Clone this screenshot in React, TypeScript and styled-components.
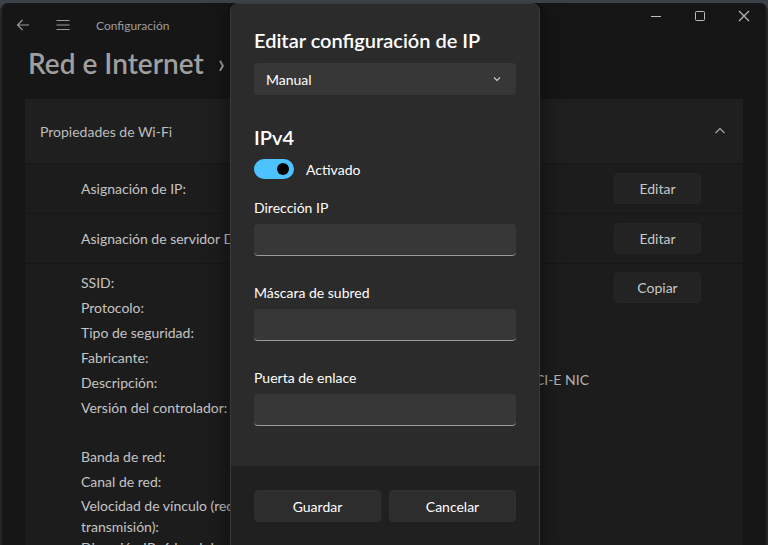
import React from 'react';
import styled, {createGlobalStyle} from 'styled-components';

const font = `"Lato", "Liberation Sans", sans-serif`;

const GlobalStyle = createGlobalStyle`
    html, body {
        margin: 0;
        padding: 0;
        background: #3b4049;
        font-family: ${font};
        overflow: hidden;
    }
`;

const infoRows = [
    'SSID:',
    'Protocolo:',
    'Tipo de seguridad:',
    'Fabricante:',
    'Descripción:',
    'Versión del controlador:',
];

const bandRows = ['Banda de red:', 'Canal de red:', 'Velocidad de vínculo (recepción/', 'transmisión):', 'Dirección IPv6 local de vínculo:'];

const fields = ['Dirección IP', 'Máscara de subred', 'Puerta de enlace'];

const App = () => {
    return (
        <>
            <GlobalStyle />
            <Window>
                <TitleBar>
                    <TitleLeft>
                        <IconSlot>
                            <svg width="16" height="16" viewBox="0 0 16 16" fill="none" stroke="#9a9a9a" strokeWidth="1.1">
                                <path d="M14 8H2.5M7.5 3L2.5 8l5 5" />
                            </svg>
                        </IconSlot>
                        <IconSlot>
                            <svg width="16" height="16" viewBox="0 0 16 16" fill="none" stroke="#9a9a9a" strokeWidth="1.1">
                                <path d="M1.5 3.5h13M1.5 8h13M1.5 12.5h13" />
                            </svg>
                        </IconSlot>
                        <AppName>Configuración</AppName>
                    </TitleLeft>
                    <Controls>
                        <ControlBtn>
                            <svg width="12" height="12" viewBox="0 0 12 12" stroke="#bdbdbd" strokeWidth="1"><path d="M1 6.5h10" /></svg>
                        </ControlBtn>
                        <ControlBtn>
                            <svg width="12" height="12" viewBox="0 0 12 12" fill="none" stroke="#bdbdbd" strokeWidth="1"><rect x="1.5" y="1.5" width="9" height="9" rx="1" /></svg>
                        </ControlBtn>
                        <ControlBtn>
                            <svg width="12" height="12" viewBox="0 0 12 12" stroke="#bdbdbd" strokeWidth="1.1"><path d="M1 1l10 10M11 1L1 11" /></svg>
                        </ControlBtn>
                    </Controls>
                </TitleBar>

                <PageTitle>
                    Red e Internet
                    <Crumb>›</Crumb>
                </PageTitle>

                <Card>
                    <CardHeader>
                        <span>Propiedades de Wi-Fi</span>
                        <svg width="14" height="14" viewBox="0 0 14 14" fill="none" stroke="#a8a8a8" strokeWidth="1.2">
                            <path d="M2.5 9L7 4.5 11.5 9" />
                        </svg>
                    </CardHeader>
                    <Row>
                        <RowLabel>Asignación de IP:</RowLabel>
                        <GhostButton>Editar</GhostButton>
                    </Row>
                    <Row>
                        <RowLabel>Asignación de servidor DNS:</RowLabel>
                        <GhostButton>Editar</GhostButton>
                    </Row>
                    <InfoBlock>
                        <InfoList>
                            {infoRows.map((r) => (
                                <InfoLine key={r}>{r}</InfoLine>
                            ))}
                            <Spacer />
                            {bandRows.map((r) => (
                                <InfoLine key={r}>{r}</InfoLine>
                            ))}
                        </InfoList>
                        <InfoValues>
                            <GhostButton>Copiar</GhostButton>
                            <ValueText>Realtek RTL8822CE 802.11ac PCI-E NIC</ValueText>
                        </InfoValues>
                    </InfoBlock>
                </Card>

                <Dialog>
                    <DialogBody>
                        <DialogTitle>Editar configuración de IP</DialogTitle>
                        <Select>
                            <span>Manual</span>
                            <svg width="10" height="10" viewBox="0 0 10 10" fill="none" stroke="#cfcfcf" strokeWidth="1.1">
                                <path d="M2 3.5l3 3 3-3" />
                            </svg>
                        </Select>
                        <SectionTitle>IPv4</SectionTitle>
                        <ToggleRow>
                            <Toggle>
                                <Knob />
                            </Toggle>
                            <span>Activado</span>
                        </ToggleRow>
                        {fields.map((f) => (
                            <Field key={f}>
                                <FieldLabel>{f}</FieldLabel>
                                <Input />
                            </Field>
                        ))}
                    </DialogBody>
                    <DialogFooter>
                        <DialogButton>Guardar</DialogButton>
                        <DialogButton>Cancelar</DialogButton>
                    </DialogFooter>
                </Dialog>
            </Window>
        </>
    );
};

const Window = styled.div`
    position: relative;
    margin-top: 3px;
    height: 542px;
    background-color: #161616;
    border-radius: 8px 8px 0 0;
    border-left: 2px solid #262626;
    border-right: 2px solid #262626;
    box-sizing: border-box;
    overflow: hidden;
    color: #c4c4c4;
`;

const TitleBar = styled.div`
    display: flex;
    justify-content: space-between;
    height: 40px;
`;

const TitleLeft = styled.div`
    display: flex;
    align-items: center;
    padding: 4px 0 0 1px;
`;

const IconSlot = styled.div`
    width: 40px;
    display: flex;
    justify-content: center;
`;

const AppName = styled.div`
    margin-left: 13px;
    font-size: 12px;
    color: #9e9e9e;
`;

const Controls = styled.div`
    display: flex;
    height: 26px;
`;

const ControlBtn = styled.div`
    width: 44px;
    display: flex;
    justify-content: center;
    align-items: center;
`;

const PageTitle = styled.div`
    display: flex;
    align-items: center;
    gap: 14px;
    padding-left: 26px;
    height: 40px;
    font-size: 28px;
    font-weight: 600;
    color: #9f9f9f;
`;

const Crumb = styled.span`
    font-size: 26px;
    font-weight: 400;
    color: #a8a8a8;
`;

const Card = styled.div`
    margin: 16px 23px 0 23px;
    background-color: #1c1c1c;
    border-radius: 4px 4px 0 0;
`;

const CardHeader = styled.div`
    display: flex;
    justify-content: space-between;
    align-items: center;
    height: 64px;
    padding: 0 16px 0 15px;
    font-size: 14px;
    color: #bcbcbc;
    background-color: #1f1f1f;
    border-bottom: 1px solid #161616;
`;

const Row = styled.div`
    display: flex;
    justify-content: space-between;
    align-items: center;
    height: 49px;
    padding: 0 42px 0 56px;
    border-bottom: 1px solid #161616;
`;

const RowLabel = styled.div`
    font-size: 14px;
    color: #c4c4c4;
`;

const GhostButton = styled.div`
    width: 87px;
    height: 31px;
    display: flex;
    align-items: center;
    justify-content: center;
    border-radius: 4px;
    background-color: #232323;
    border: 1px solid #262626;
    box-sizing: border-box;
    font-size: 14px;
    color: #c8c8c8;
`;

const InfoBlock = styled.div`
    display: flex;
    justify-content: space-between;
    padding: 6px 42px 0 56px;
`;

const InfoList = styled.div`
    display: flex;
    flex-direction: column;
`;

const InfoLine = styled.div`
    font-size: 14px;
    line-height: 25px;
    height: 25px;
    color: #c4c4c4;
    white-space: nowrap;

    &:nth-child(n + 10) {
        line-height: 18px;
        height: 18px;
        margin-top: 3px;
    }
`;

const Spacer = styled.div`
    height: 24px;
`;

const InfoValues = styled.div`
    display: flex;
    flex-direction: column;
    align-items: flex-end;
    padding-top: 2px;
`;

const ValueText = styled.div`
    margin-top: 64px;
    margin-right: 112px;
    font-size: 14px;
    line-height: 25px;
    color: #b4b4b4;
    white-space: nowrap;
`;

const Dialog = styled.div`
    position: absolute;
    left: 228px;
    top: 0;
    width: 310px;
    height: 560px;
    background-color: #2b2b2b;
    border: 1px solid #3a3a3a;
    border-radius: 8px;
    box-sizing: border-box;
    display: flex;
    flex-direction: column;
    overflow: hidden;
    box-shadow: 0 0 24px rgba(0, 0, 0, 0.5);
`;

const DialogBody = styled.div`
    padding: 21px 23px 0 23px;
    height: 462px;
    box-sizing: border-box;
    display: flex;
    flex-direction: column;
`;

const DialogTitle = styled.div`
    font-size: 20px;
    font-weight: 600;
    color: #ffffff;
    height: 30px;
    line-height: 30px;
`;

const Select = styled.div`
    margin-top: 8px;
    height: 32px;
    flex-shrink: 0;
    display: flex;
    align-items: center;
    justify-content: space-between;
    padding: 0 14px 0 12px;
    border-radius: 4px;
    background-color: #373737;
    font-size: 14px;
    color: #ffffff;
`;

const SectionTitle = styled.div`
    margin-top: 28px;
    font-size: 20px;
    font-weight: 600;
    color: #ffffff;
    height: 28px;
    line-height: 28px;
`;

const ToggleRow = styled.div`
    display: flex;
    align-items: center;
    gap: 12px;
    margin-top: 8px;
    height: 20px;
    font-size: 14px;
    color: #ffffff;
`;

const Toggle = styled.div`
    width: 40px;
    height: 20px;
    border-radius: 10px;
    background-color: #4cc2ff;
    display: flex;
    align-items: center;
    justify-content: flex-end;
    padding-right: 5px;
    box-sizing: border-box;
`;

const Knob = styled.div`
    width: 12px;
    height: 12px;
    border-radius: 50%;
    background-color: #000000;
`;

const Field = styled.div`
    display: flex;
    flex-direction: column;
    margin-top: 19px;

    & + & {
        margin-top: 27px;
    }
`;

const FieldLabel = styled.div`
    font-size: 14px;
    color: #ffffff;
    height: 20px;
    line-height: 20px;
`;

const Input = styled.div`
    margin-top: 6px;
    height: 32px;
    border-radius: 4px;
    background-color: #373737;
    border-bottom: 1px solid #9a9a9a;
    box-sizing: border-box;
`;

const DialogFooter = styled.div`
    flex: 1;
    background-color: #202020;
    border-top: 1px solid #1d1d1d;
    display: grid;
    grid-template-columns: 1fr 1fr;
    gap: 8px;
    padding: 23px 23px 0 23px;
    align-content: start;
`;

const DialogButton = styled.div`
    height: 32px;
    border-radius: 4px;
    background-color: #2d2d2d;
    border: 1px solid #303030;
    box-sizing: border-box;
    display: flex;
    align-items: center;
    justify-content: center;
    font-size: 14px;
    color: #ffffff;
`;

export default App;
